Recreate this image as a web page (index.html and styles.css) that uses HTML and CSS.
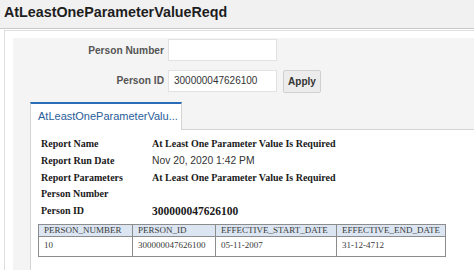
FILE: index.html
```html
<!DOCTYPE html>
<html>
<head>
  <meta charset="UTF-8">
  <title>AtLeastOneParameterValueReqd</title>
  <link rel="stylesheet" href="styles.css">
</head>
<body>
  <div class="header">
    <h1>AtLeastOneParameterValueReqd</h1>
  </div>

  <div class="frame">
    <div class="panel">
      <!-- parameters -->
      <div class="params">
        <label for="personNumber">Person Number</label>
        <input type="text" id="personNumber" value="">
        <span></span>
        <label for="personId">Person ID</label>
        <input type="text" id="personId" value="300000047626100">
        <button class="btn">Apply</button>
      </div>

      <div class="tabs">
        <div class="tab active">AtLeastOneParameterValu...</div>
      </div>

      <!-- report output -->
      <div class="report">
        <div class="info">
          <div class="info-label">Report Name</div>
          <div class="info-value">At Least One Parameter Value Is Required</div>
          <div class="info-label">Report Run Date</div>
          <div class="info-value date">Nov 20, 2020 1:42 PM</div>
          <div class="info-label">Report Parameters</div>
          <div class="info-value">At Least One Parameter Value Is Required</div>
          <div class="info-label">Person Number</div>
          <div class="info-value"></div>
          <div class="info-label">Person ID</div>
          <div class="info-value big">300000047626100</div>
        </div>

        <table class="data">
          <colgroup>
            <col style="width: 94px">
            <col style="width: 83px">
            <col style="width: 121px">
            <col style="width: 109px">
          </colgroup>
          <tr>
            <th>PERSON_NUMBER</th>
            <th>PERSON_ID</th>
            <th>EFFECTIVE_START_DATE</th>
            <th>EFFECTIVE_END_DATE</th>
          </tr>
          <tr>
            <td>10</td>
            <td>300000047626100</td>
            <td>05-11-2007</td>
            <td>31-12-4712</td>
          </tr>
        </table>
      </div>
    </div>
  </div>
</body>
</html>
```

FILE: styles.css
```css
body {
  margin: 0;
  width: 474px;
  height: 271px;
  overflow: hidden;
  font-family: "Liberation Sans", Arial, sans-serif;
  background: #fff;
}
.header {
  height: 28px;
  background: #f1f1f1;
  border-bottom: 1px solid #c9c9c9;
  padding-left: 4px;
}
.header h1 {
  margin: 0;
  padding-top: 1px;
  font-size: 14.3px;
  line-height: 22px;
  font-weight: bold;
  color: #1e1e1e;
}
.frame {
  margin: 1px 0 0 4px;
  border: 1px solid #dedede;
  border-right: none;
  border-bottom: none;
  padding: 7px 0 0 8px;
  height: 232px;
}
.panel {
  display: flex;
  flex-direction: column;
  background: #f4f4f4;
  height: 100%;
  box-sizing: border-box;
  padding-top: 1px;
}
.params {
  display: grid;
  grid-template-columns: 151px 109px 38px;
  column-gap: 4px;
  row-gap: 7px;
  align-items: center;
}
.params label {
  text-align: right;
  font-size: 10.2px;
  font-weight: bold;
  color: #555;
}
.params input {
  height: 22px;
  box-sizing: border-box;
  border: 1px solid #e2e2e2;
  background: #fff;
  padding: 0 5px;
  font-family: "Liberation Sans", Arial, sans-serif;
  font-size: 10px;
  color: #333;
  outline: none;
}
.btn {
  margin-left: 2px;
  margin-top: 2px;
  height: 23px;
  width: 38px;
  padding: 0;
  border: 1px solid #d0d0d0;
  border-radius: 2px;
  background: #ececec;
  font-family: "Liberation Sans", Arial, sans-serif;
  font-size: 10px;
  font-weight: bold;
  color: #333;
}
.tabs {
  display: flex;
  margin: 9px 0 0 17px;
  position: relative;
  z-index: 1;
}
.tab {
  box-sizing: border-box;
  width: 152px;
  height: 28px;
  border-top: 2px solid #2a6cb8;
  border-left: 1px solid #d4d4d4;
  border-right: 1px solid #d4d4d4;
  background: #fff;
  padding: 0 0 1px 7px;
  font-size: 11px;
  line-height: 25px;
  color: #2a5d9a;
  white-space: nowrap;
}
.report {
  flex: 1;
  margin-left: 17px;
  margin-top: -1px;
  background: #fff;
  border-top: 1px solid #d4d4d4;
  border-left: 1px solid #d4d4d4;
  padding: 6px 0 0 7px;
}
.info {
  display: grid;
  grid-template-columns: 111px auto;
  padding-left: 3px;
  font-family: "Liberation Serif", "Times New Roman", serif;
  font-size: 10px;
  line-height: 16.75px;
  color: #1a1a1a;
}
.info-label,
.info-value {
  font-weight: bold;
  height: 16.75px;
}
.info-value.date {
  font-family: "Liberation Sans", Arial, sans-serif;
  font-weight: normal;
  font-size: 10.3px;
  color: #333;
}
.info-value.big {
  font-size: 11.5px;
}
.data {
  margin-top: 4px;
  border-collapse: collapse;
  table-layout: fixed;
  width: 407px;
  font-family: "Liberation Serif", "Times New Roman", serif;
  font-size: 9px;
  color: #3a3a3a;
}
.data th,
.data td {
  border: 1px solid #8c8c8c;
  text-align: left;
  font-weight: normal;
  white-space: nowrap;
  overflow: hidden;
}
.data th {
  background: #dce6f2;
  padding: 0 5px;
  line-height: 11px;
}
.data td {
  padding: 3px 5px 5px;
  line-height: 11px;
}
```
